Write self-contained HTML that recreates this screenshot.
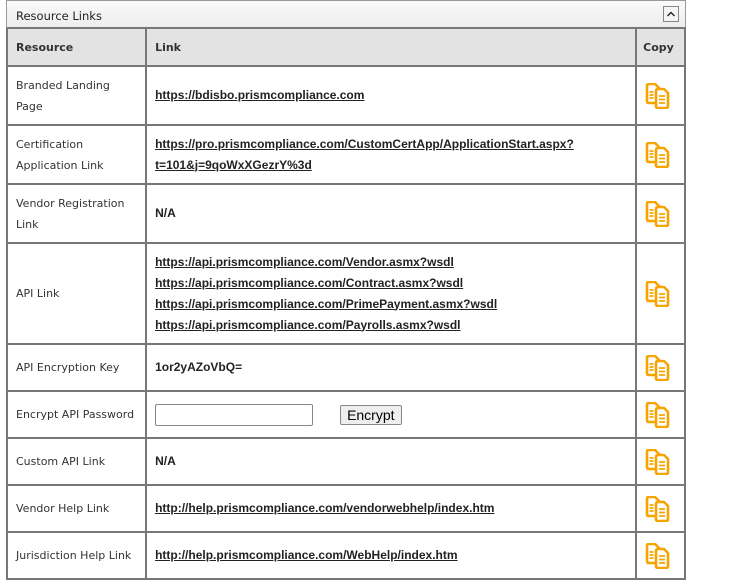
<!DOCTYPE html>
<html><head><style>
body{margin:0;background:#fff;width:730px;height:577px;overflow:hidden;font-family:"DejaVu Sans","Liberation Sans",sans-serif;}
.hdr{position:absolute;left:6px;top:0;width:678px;height:27px;border:1px solid #999;border-bottom:none;background:linear-gradient(#fafafa,#ececec);font-size:11.5px;color:#222;}
.hdr span{position:absolute;left:9px;top:8px;}
.tog{position:absolute;left:656px;top:5px;width:14px;height:14px;border:1px solid #888;background:#f4f4f4;}
table{position:absolute;left:6px;top:27px;border-collapse:collapse;width:680px;}
td,th{border:2px solid #777;padding:0 0 0 8px;font-size:11px;color:#333;}
th{background:#e3e3e3;text-align:left;height:36px;font-weight:bold;}
td.l{color:#333;line-height:21px;}
td.k{font-family:"Liberation Sans",Arial,sans-serif;font-weight:bold;font-size:12px;color:#222;line-height:21px;}
td.k a{color:#222;text-decoration:underline;}
td.c{padding:0;text-align:center;}
input{width:156px;height:20px;border:1px solid #888;border-radius:2px;padding:0;vertical-align:middle;}
button{margin-left:27px;font-family:"Liberation Sans",Arial,sans-serif;font-size:14px;border:1px solid #888;background:#eee;border-radius:2px;padding:1px 6px;vertical-align:middle;}
</style></head><body>
<div class="hdr"><span>Resource Links</span><div class="tog"><svg width="14" height="14" viewBox="0 0 14 14"><path d="M3.5 9L7 5.5 10.5 9" fill="none" stroke="#223" stroke-width="1.4"/></svg></div></div>
<table>
<colgroup><col style="width:140px"><col style="width:491px"><col style="width:49px"></colgroup>
<tr><th>Resource</th><th>Link</th><th style="padding-left:6px">Copy</th></tr>
<tr style="height:59px"><td class="l">Branded Landing<br>Page</td><td class="k"><a>https://bdisbo.prismcompliance.com</a></td><td class="c">ICON</td></tr>
<tr style="height:59px"><td class="l">Certification<br>Application Link</td><td class="k"><a>https://pro.prismcompliance.com/CustomCertApp/ApplicationStart.aspx?<br>t=101&amp;j=9qoWxXGezrY%3d</a></td><td class="c">ICON</td></tr>
<tr style="height:59px"><td class="l">Vendor Registration<br>Link</td><td class="k">N/A</td><td class="c">ICON</td></tr>
<tr style="height:101px"><td class="l">API Link</td><td class="k"><a>https://api.prismcompliance.com/Vendor.asmx?wsdl</a><br><a>https://api.prismcompliance.com/Contract.asmx?wsdl</a><br><a>https://api.prismcompliance.com/PrimePayment.asmx?wsdl</a><br><a>https://api.prismcompliance.com/Payrolls.asmx?wsdl</a></td><td class="c">ICON</td></tr>
<tr style="height:47px"><td class="l">API Encryption Key</td><td class="k">1or2yAZoVbQ=</td><td class="c">ICON</td></tr>
<tr style="height:47px"><td class="l">Encrypt API Password</td><td class="k"><input><button>Encrypt</button></td><td class="c">ICON</td></tr>
<tr style="height:47px"><td class="l">Custom API Link</td><td class="k">N/A</td><td class="c">ICON</td></tr>
<tr style="height:47px"><td class="l">Vendor Help Link</td><td class="k"><a>http://help.prismcompliance.com/vendorwebhelp/index.htm</a></td><td class="c">ICON</td></tr>
<tr style="height:47px"><td class="l">Jurisdiction Help Link</td><td class="k"><a>http://help.prismcompliance.com/WebHelp/index.htm</a></td><td class="c">ICON</td></tr>
</table>
<script>
var svg='<svg width="26" height="26" viewBox="0 0 26 26" style="display:block;margin:0 0 0 8px"><g fill="#fff" stroke="#f7a400" stroke-width="2.6"><path d="M2 3q0-2 2-2h6l4 4v13q0 2-2 2H4q-2 0-2-2z"/><path d="M11 8q0-2 2-2h6l4 4v13q0 2-2 2h-8q-2 0-2-2z"/></g><g stroke="#f7a400" stroke-width="1.8"><path d="M4.5 9h4M4.5 12h4M4.5 15h4M14 13h6M14 16.5h6M14 20h6"/></g></svg>';
document.querySelectorAll('td.c').forEach(function(t){t.innerHTML=svg;});
</script>
</body></html>
